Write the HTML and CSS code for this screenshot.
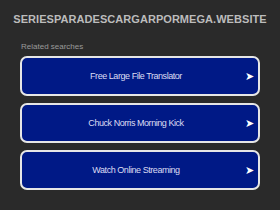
FILE: index.html
```html
<!DOCTYPE html>
<html lang="en">
<head>
    <meta charset="UTF-8">
    <meta name="viewport" content="width=device-width, initial-scale=1.0">
    <title>seriesparadescargarpormega.website</title>
    <link rel="stylesheet" href="styles.css">
</head>
<body>
    <div class="page">
        <h1 class="domain">seriesparadescargarpormega.website</h1>
        <div class="related">
            <div class="related-title">Related searches</div>
            <a class="search" href="#">
                <span class="search-text">Free Large File Translator</span>
                <span class="arrow">&#10148;</span>
            </a>
            <a class="search" href="#">
                <span class="search-text">Chuck Norris Morning Kick</span>
                <span class="arrow">&#10148;</span>
            </a>
            <a class="search" href="#">
                <span class="search-text">Watch Online Streaming</span>
                <span class="arrow">&#10148;</span>
            </a>
        </div>
    </div>
</body>
</html>
```

FILE: styles.css
```css
body {
    margin: 0;
    background-color: #2a2a2a;
    font-family: "Liberation Sans", Arial, sans-serif;
    color: #bdbdbd;
}
.page {
    width: 280px;
    height: 210px;
    overflow: hidden;
}
.domain {
    margin: 0;
    padding-top: 12px;
    text-align: center;
    text-transform: uppercase;
    font-size: 11px;
    line-height: 15px;
    font-weight: bold;
    letter-spacing: 0.05px;
    color: #bcbcbc;
    white-space: nowrap;
}
.related {
    margin: 0 20px;
    padding-top: 15px;
}
.related-title {
    font-size: 8px;
    line-height: 10px;
    color: #9a9a9a;
    padding-left: 1px;
    margin-bottom: 4px;
}
.search {
    display: flex;
    align-items: center;
    position: relative;
    height: 36px;
    padding-right: 8px;
    margin-bottom: 7px;
    border: 2px solid #e6e6e6;
    border-radius: 7px;
    background-color: #001986;
    color: #dcdcf2;
    text-decoration: none;
}
.search-text {
    flex: 1;
    text-align: center;
    font-size: 9px;
    letter-spacing: -0.45px;
}
.arrow {
    position: absolute;
    right: 4px;
    font-size: 11px;
    color: #ffffff;
}
```
